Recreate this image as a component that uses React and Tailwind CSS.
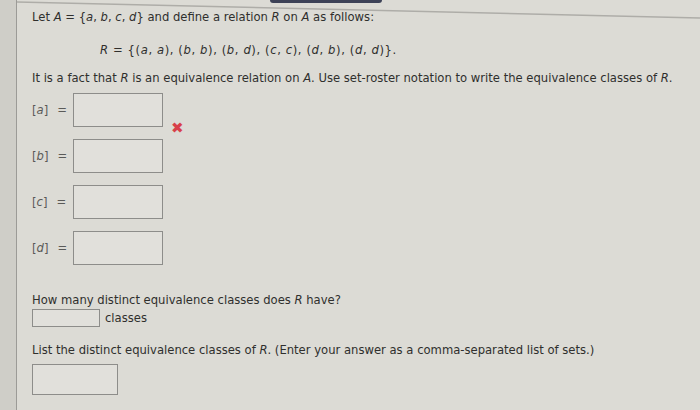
const FONT = { fontFamily: '"DejaVu Sans", Verdana, sans-serif' }

function Box({ className }) {
  return <div className={`border border-[#8d8d8a] bg-[#e1e0db] ${className}`} />
}

function ClassRow({ v, wrong }) {
  return (
    <div className="relative flex items-center h-[34px]">
      <div className="w-[41px] flex items-center text-[#5a5a58]">
        <span>[<i>{v}</i>]</span>
        <span className="ml-[9px]">=</span>
      </div>
      <Box className="w-[90px] h-[34px]" />
      {wrong && (
        <span className="absolute left-[139px] top-[28px] text-[#d8404a] text-[15px] font-bold leading-none">✖</span>
      )}
    </div>
  )
}

export default function App() {
  return (
    <div style={FONT} className="w-[700px] h-[410px] flex overflow-hidden bg-[#dcdbd5] text-[#2f2f2d] text-[11.6px] leading-[16px]">
      <div className="w-[17px] shrink-0 bg-[#cfcec8] border-r border-[#9c9b97]" />
      <div className="relative flex-1 pl-[15px]">
        <svg className="absolute left-0 top-0" width="683" height="24">
          <line x1="0" y1="2" x2="683" y2="18" stroke="#aeada8" strokeWidth="1.5" />
        </svg>
        <div className="absolute left-[253px] top-0 w-[112px] h-[3px] bg-[#3d4257] rounded-b-sm" />

        <p className="mt-[9px]">
          Let <i>A</i> = {'{'}<i>a</i>, <i>b</i>, <i>c</i>, <i>d</i>{'}'} and define a relation <i>R</i> on <i>A</i> as follows:
        </p>
        <p className="mt-[17px] pl-[68px] tracking-[0.6px]">
          <i>R</i> = {'{'}(<i>a</i>, <i>a</i>), (<i>b</i>, <i>b</i>), (<i>b</i>, <i>d</i>), (<i>c</i>, <i>c</i>), (<i>d</i>, <i>b</i>), (<i>d</i>, <i>d</i>){'}'}.
        </p>
        <p className="mt-[12px]">
          It is a fact that <i>R</i> is an equivalence relation on <i>A</i>. Use set-roster notation to write the equivalence classes of <i>R</i>.
        </p>

        <div className="mt-[7px] flex flex-col gap-[12px]">
          <ClassRow v="a" wrong />
          <ClassRow v="b" />
          <ClassRow v="c" />
          <ClassRow v="d" />
        </div>

        <p className="mt-[27px]">
          How many distinct equivalence classes does <i>R</i> have?
        </p>
        <div className="mt-[1px] flex items-center gap-[5px]">
          <Box className="w-[68px] h-[18px]" />
          <span>classes</span>
        </div>

        <p className="mt-[15px]">
          List the distinct equivalence classes of <i>R</i>. (Enter your answer as a comma-separated list of sets.)
        </p>
        <Box className="mt-[6px] w-[86px] h-[31px]" />
      </div>
    </div>
  )
}
